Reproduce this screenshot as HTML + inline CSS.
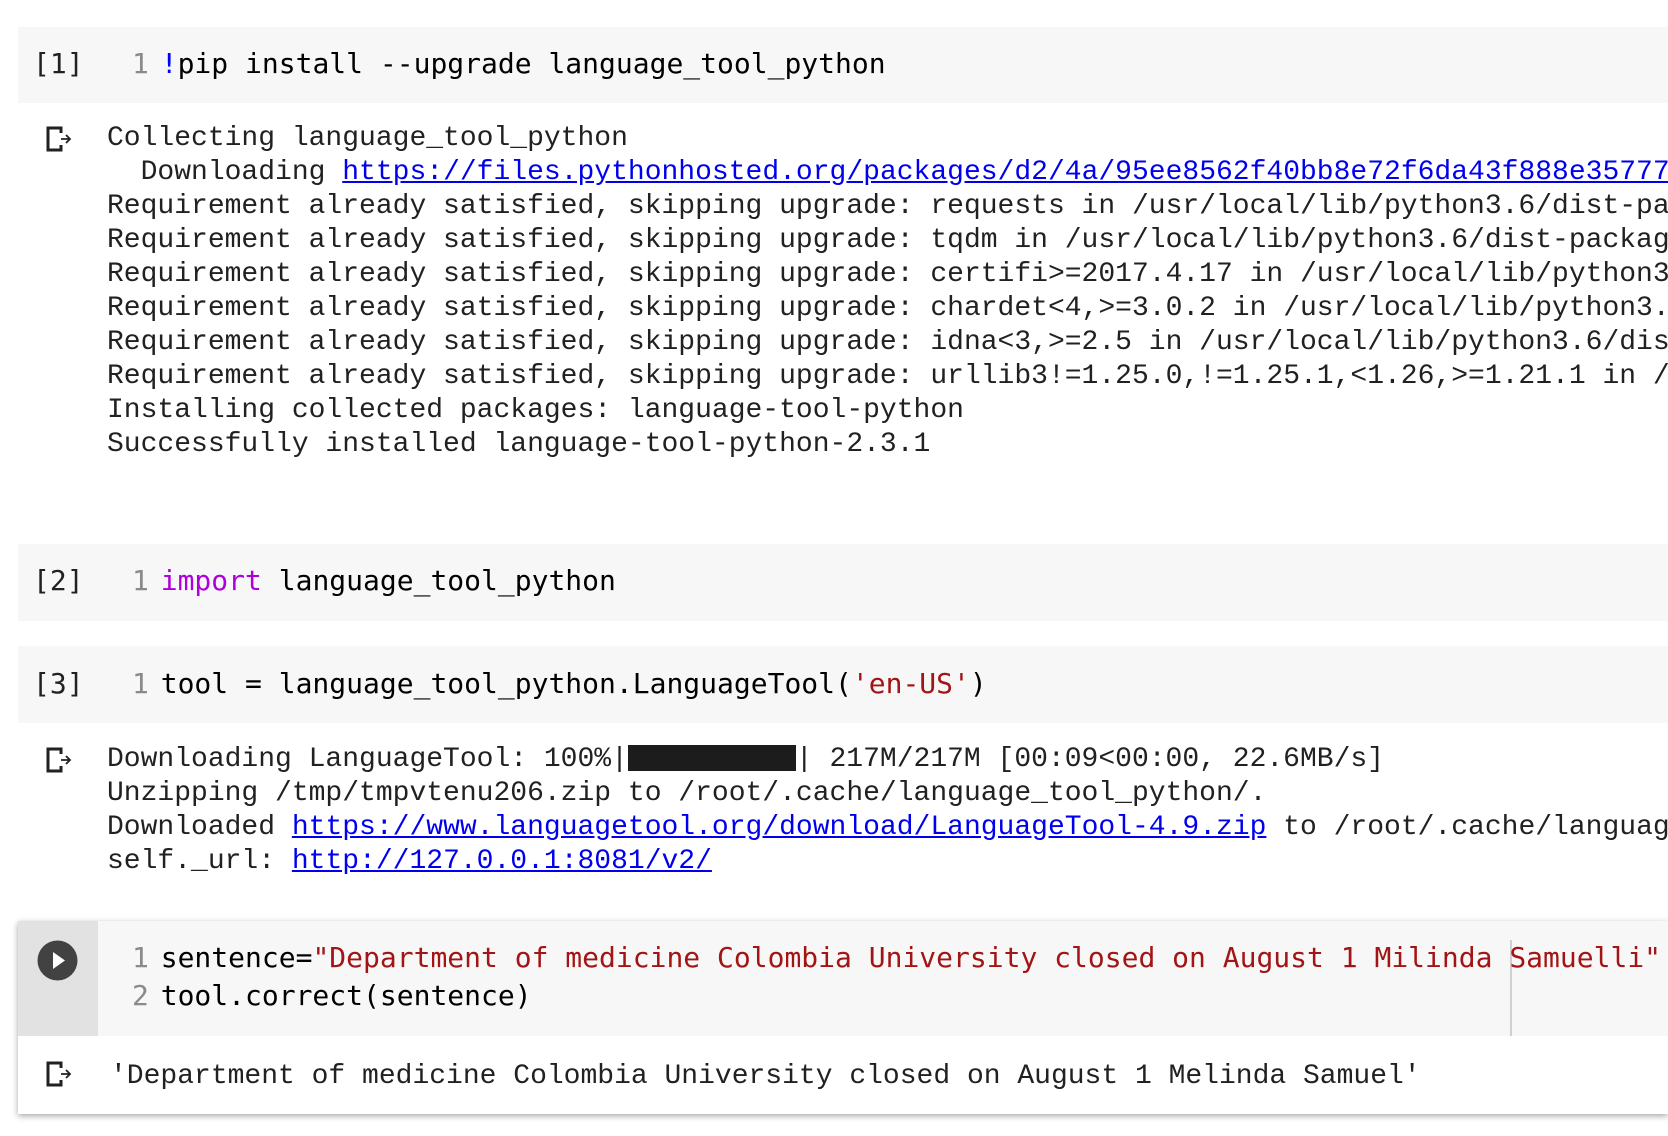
<!DOCTYPE html>
<html><head><meta charset="utf-8">
<style>
html,body{margin:0;padding:0;background:#fff;overflow:hidden;}
body{width:1668px;height:1136px;position:relative;overflow:hidden;}
.cell{position:absolute;left:18px;right:0;background:#f7f7f7;}
.code{position:absolute;font-family:"DejaVu Sans Mono",monospace;font-size:28px;line-height:38px;white-space:pre;color:#000;}
.ln{color:#8a8a8a;margin-right:-5px;}
.out{position:absolute;left:107px;font-family:"Liberation Mono",monospace;font-size:28px;line-height:34px;white-space:pre;color:#212121;}
a{color:#0000ee;text-decoration:underline;}
.icon{position:absolute;width:28px;height:28px;}
.str{color:#a31515;}
.kw{color:#af00db;}
.bang{color:#0000ff;}
.bar{display:inline-block;width:168px;height:26px;background:#1c1c1c;vertical-align:-5px;}
</style></head><body>

<div class="cell" style="top:27px;height:76px;"></div>
<div class="code" style="left:33px;top:45px;color:#212121">[1]</div>
<div class="code" style="left:132px;top:45px"><span class="ln">1 </span><span class="bang">!</span>pip install --upgrade language_tool_python</div>

<svg class="icon" style="left:45px;top:125px" viewBox="0 0 28 28"><path d="M16 8V3H3v22h13v-5" fill="none" stroke="#212121" stroke-width="3"/><path d="M16 14h9M21 10l4 4-4 4" fill="none" stroke="#212121" stroke-width="1.8"/></svg>
<div class="out" style="top:122px">Collecting language_tool_python
  Downloading <a>https://files.pythonhosted.org/packages/d2/4a/95ee8562f40bb8e72f6da43f888e35777c1b3e0cd2d0f2a3f6c7d1a2b3c4d5e6/language_tool_python-2.3.1-py3-none-any.whl</a>
Requirement already satisfied, skipping upgrade: requests in /usr/local/lib/python3.6/dist-packages
Requirement already satisfied, skipping upgrade: tqdm in /usr/local/lib/python3.6/dist-packages
Requirement already satisfied, skipping upgrade: certifi>=2017.4.17 in /usr/local/lib/python3.6/dist-packages
Requirement already satisfied, skipping upgrade: chardet&lt;4,&gt;=3.0.2 in /usr/local/lib/python3.6/dist-packages
Requirement already satisfied, skipping upgrade: idna&lt;3,&gt;=2.5 in /usr/local/lib/python3.6/dist-packages
Requirement already satisfied, skipping upgrade: urllib3!=1.25.0,!=1.25.1,&lt;1.26,&gt;=1.21.1 in /usr/local/lib
Installing collected packages: language-tool-python
Successfully installed language-tool-python-2.3.1</div>

<div class="cell" style="top:544px;height:77px;"></div>
<div class="code" style="left:33px;top:562px;color:#212121">[2]</div>
<div class="code" style="left:132px;top:562px"><span class="ln">1 </span><span class="kw">import</span> language_tool_python</div>

<div class="cell" style="top:646px;height:77px;"></div>
<div class="code" style="left:33px;top:665px;color:#212121">[3]</div>
<div class="code" style="left:132px;top:665px"><span class="ln">1 </span>tool = language_tool_python.LanguageTool(<span class="str">'en-US'</span>)</div>

<svg class="icon" style="left:45px;top:746px" viewBox="0 0 28 28"><path d="M16 8V3H3v22h13v-5" fill="none" stroke="#212121" stroke-width="3"/><path d="M16 14h9M21 10l4 4-4 4" fill="none" stroke="#212121" stroke-width="1.8"/></svg>
<div class="out" style="top:743px">Downloading LanguageTool: 100%|<span class="bar"></span>| 217M/217M [00:09&lt;00:00, 22.6MB/s]
Unzipping /tmp/tmpvtenu206.zip to /root/.cache/language_tool_python/.
Downloaded <a>https://www.languagetool.org/download/LanguageTool-4.9.zip</a> to /root/.cache/language_tool_python/.
self._url: <a>http://127.0.0.1:8081/v2/</a></div>

<div style="position:absolute;left:18px;right:0;top:921px;height:193px;background:#fff;box-shadow:0 2px 6px rgba(0,0,0,0.35);"></div>
<div style="position:absolute;left:18px;width:80px;top:921px;height:115px;background:#e2e2e2;"></div>
<div style="position:absolute;left:98px;right:0;top:921px;height:115px;background:#f7f7f7;"></div>
<svg style="position:absolute;left:37px;top:940px" width="41" height="41" viewBox="0 0 41 41"><circle cx="20.5" cy="20.5" r="20" fill="#424242"/><path d="M16 12v17l12-8.5z" fill="#fff"/></svg>
<div style="position:absolute;left:1510px;top:940px;width:2px;height:96px;background:#d0d0d0;"></div>
<div class="code" style="left:132px;top:939px"><span class="ln">1 </span>sentence=<span class="str">"Department of medicine Colombia University closed on August 1 Milinda Samuelli"</span>
<span class="ln">2 </span>tool.correct(sentence)</div>

<svg class="icon" style="left:45px;top:1060px" viewBox="0 0 28 28"><path d="M16 8V3H3v22h13v-5" fill="none" stroke="#212121" stroke-width="3"/><path d="M16 14h9M21 10l4 4-4 4" fill="none" stroke="#212121" stroke-width="1.8"/></svg>
<div class="out" style="top:1060px;left:110px">'Department of medicine Colombia University closed on August 1 Melinda Samuel'</div>

</body></html>
